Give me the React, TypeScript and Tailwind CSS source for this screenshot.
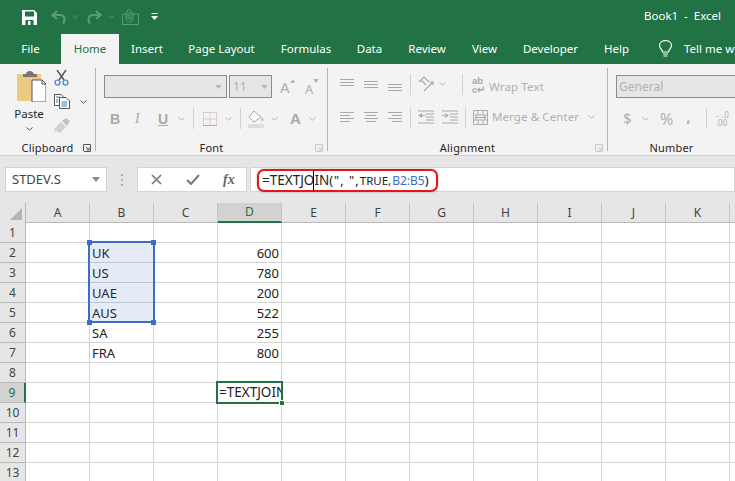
import React from "react";

const FONT = { fontFamily: '"Noto Sans", sans-serif' };

const Chev = ({ className = "", color = "#b4b4b4" }: { className?: string; color?: string }) => (
  <svg width="7" height="4" viewBox="0 0 7 4" className={className}>
    <path d="M0.5 0.5 L3.5 3.2 L6.5 0.5" fill="none" stroke={color} strokeWidth="1" />
  </svg>
);
const Tri = ({ className = "" }: { className?: string }) => (
  <svg width="7" height="4" viewBox="0 0 7 4" className={className}><path d="M0 0H7L3.5 4Z" fill="#b9b9b9" /></svg>
);
const Lines = ({ rows, w = 15 }: { rows: [number, number, number][]; w?: number }) => (
  <svg width={w} height="16" viewBox={`0 0 ${w} 16`}>
    {rows.map(([y, x1, x2], i) => <rect key={i} x={x1} y={y} width={x2 - x1} height="1" fill="#a8a8a8" />)}
  </svg>
);
const Launcher = ({ color = "#c0c0c0" }: { color?: string }) => (
  <svg width="8" height="8" viewBox="0 0 8 8">
    <path d="M0.5 7V0.5H7.5V7.5H1M3 3L6 6M6 3.5V6H3.5" fill="none" stroke={color} strokeWidth="1" />
  </svg>
);
const BigA = ({ up }: { up: boolean }) => (
  <div className="flex items-start w-[15px] h-[18px]">
    <span className={`${up ? "text-[15px]" : "text-[13px] mt-[2px]"} leading-[18px] text-[#b0b0b0]`}>A</span>
    <svg width="6" height="4" viewBox="0 0 6 4" className="mt-[1px]">
      <path d={up ? "M0 4L3 0L6 4Z" : "M0 0H6L3 4Z"} fill="#b4b4b4" />
    </svg>
  </div>
);
const VSep = ({ className = "" }: { className?: string }) => <div className={`w-px h-[21px] bg-[#d2d2d2] ${className}`} />;

const Tabs: [string, number][] = [
  ["File", 61], ["Home", 58], ["Insert", 56], ["Page Layout", 93], ["Formulas", 76], ["Data", 51],
  ["Review", 64], ["View", 51], ["Developer", 81], ["Help", 51],
];
const Cols = ["A", "B", "C", "D", "E", "F", "G", "H", "I", "J", "K", "L"];
const Data: Record<number, { b?: string; d?: string }> = {
  2: { b: "UK", d: "600" }, 3: { b: "US", d: "780" }, 4: { b: "UAE", d: "200" }, 5: { b: "AUS", d: "522" },
  6: { b: "SA", d: "255" }, 7: { b: "FRA", d: "800" },
};

function TitleBar() {
  return (
    <div className="h-[34px] bg-[#217346] flex items-center relative">
      <svg width="15" height="15" viewBox="0 0 15 15" className="ml-[22px]">
        <path d="M0 0H12L15 3V15H0Z" fill="#fff" />
        <rect x="3" y="1.5" width="9" height="5" fill="#217346" />
        <rect x="3.5" y="10" width="8" height="5" fill="#217346" />
        <rect x="6" y="11" width="2.5" height="4" fill="#fff" />
      </svg>
      <svg width="15" height="14" viewBox="0 0 15 14" className="ml-[14px]">
        <path d="M6 1L1.5 5L6 9M2 5H9C12 5 13.5 7 13.5 9.5C13.5 11 13 12.5 12 13.5" fill="none" stroke="#5a9a78" strokeWidth="2.2" />
      </svg>
      <Chev color="#5a9a78" className="ml-[6px]" />
      <svg width="15" height="14" viewBox="0 0 15 14" className="ml-[8px]">
        <path d="M9 1L13.5 5L9 9M13 5H6C3 5 1.5 7 1.5 9.5C1.5 11 2 12.5 3 13.5" fill="none" stroke="#5a9a78" strokeWidth="2.2" />
      </svg>
      <Chev color="#5a9a78" className="ml-[6px]" />
      <svg width="17" height="16" viewBox="0 0 17 16" className="ml-[7px]">
        <path d="M0.5 5H4M11 5H16.5V15.5H0.5V5" fill="none" stroke="#5a9a78" />
        <path d="M5 10V3C5 1 6 0.5 7 0.5C8 0.5 9 1 9 3V10C9 11 7 11 7 10V3M11 3V10C11 12.5 9 13 8 13C6 13 4 12.5 4 10V4" fill="none" stroke="#5a9a78" />
      </svg>
      <svg width="7" height="7" viewBox="0 0 7 7" className="ml-[12px] mb-[2px]">
        <rect x="0.5" y="0" width="6" height="1" fill="#fff" /><path d="M0 3H7L3.5 7Z" fill="#fff" />
      </svg>
      <span className="absolute left-[644px] top-[7px] text-[11.5px] leading-[18px] text-white whitespace-pre">Book1  -  Excel</span>
    </div>
  );
}

function TabRow() {
  return (
    <div className="h-[30px] bg-[#217346] flex overflow-hidden">
      {Tabs.map(([t, w]) => (
        <div key={t} style={{ width: w }} className={`flex items-center justify-center shrink-0 text-[11.5px] ${t === "Home" ? "bg-[#f3f3f3] text-[#217346]" : "text-white"}`}>
          {t}
        </div>
      ))}
      <svg width="15" height="18" viewBox="0 0 15 18" className="ml-[16px] mt-[6px] shrink-0">
        <path d="M4.5 12C4.5 9.5 1.5 8.5 1.5 5.5C1.5 2.5 4.3 0.7 7.5 0.7C10.7 0.7 13.5 2.5 13.5 5.5C13.5 8.5 10.5 9.5 10.5 12ZM5 14H10M5.5 16H9.5" fill="none" stroke="#fff" strokeWidth="1.2" />
      </svg>
      <span className="ml-[11px] text-[11.5px] text-white leading-[30px] whitespace-nowrap">Tell me what</span>
    </div>
  );
}

function Group({ label, width, children, launcher }: { label: string; width: number; children: React.ReactNode; launcher?: string }) {
  return (
    <div style={{ width }} className="shrink-0 flex flex-col h-full relative">
      <div className="flex-1 min-h-0">{children}</div>
      <div className="h-[14px] text-center text-[11px] leading-[14px] text-[#262626] tracking-[0.2px] relative">
        {label}
        {launcher && <span className="absolute right-[4px] top-[3px] flex"><Launcher color={launcher} /></span>}
      </div>
    </div>
  );
}

function Ribbon() {
  return (
    <div className="h-[92px] bg-[#f3f3f3] border-b border-[#d2d2d2] flex text-[#b0b0b0] overflow-hidden">
      <Group label="Clipboard" width={95} launcher="#555555">
        <div className="flex">
          <div className="w-[51px] flex flex-col items-center pl-[7px] pt-[7px]">
            <svg width="29" height="31" viewBox="0 0 29 31" className="ml-[4px]">
              <path d="M0 3H24V30H0Z" fill="#eec981" />
              <path d="M9 3C9 1 11 0 13 0C15 0 16 1 17 3H20V6H6V3Z" fill="#777" />
              <path d="M15 9H25L29 13V31H15Z" fill="#fff" stroke="#555" strokeWidth="1" />
              <path d="M25 9V13H29" fill="none" stroke="#555" />
            </svg>
            <span className="text-[11.5px] leading-[14px] text-[#262626] mt-[5px]">Paste</span>
            <Chev color="#555" className="mt-[6px]" />
          </div>
          <div className="flex flex-col pl-[3px] pt-[6px]">
            <svg width="15" height="16" viewBox="0 0 15 16">
              <path d="M3 0L10 10M12 0L5 10" stroke="#555" strokeWidth="1.5" fill="none" />
              <circle cx="3.5" cy="12.5" r="2.5" fill="none" stroke="#3f7fc1" strokeWidth="1.2" />
              <circle cx="11.5" cy="12.5" r="2.5" fill="none" stroke="#3f7fc1" strokeWidth="1.2" />
            </svg>
            <div className="flex items-center mt-[8px]">
              <svg width="16" height="15" viewBox="0 0 16 15">
                <path d="M0.5 0.5H7L9 2.5V4M0.5 0.5V11.5H5" fill="#fff" stroke="#555" />
                <path d="M5.5 3.5H12L15.5 7V14.5H5.5Z" fill="#fff" stroke="#555" />
                <path d="M2 3H6M2 6H4M2 8H4M7.5 8H13M7.5 10H13M7.5 12H13" stroke="#3f7fc1" />
              </svg>
              <Chev color="#555" className="ml-[10px]" />
            </div>
            <svg width="17" height="15" viewBox="0 0 17 15" className="mt-[9px]">
              <path d="M0 11L7 4L12 9L6 15L3 13L1 14Z" fill="#d4d0d0" />
              <path d="M8 3L12 0L16 3L13 8Z" fill="#c4c0c0" />
            </svg>
          </div>
        </div>
      </Group>
      <div className="w-px my-1 bg-[#b5b5b5]" />
      <Group label="Font" width={231} launcher="#c8c8c8">
        <div className="flex flex-col">
          <div className="flex items-center mt-[11px] h-[23px]">
            <div className="ml-[8px] w-[123px] h-[23px] bg-[#e6e6e6] border border-[#8a8a8a] flex items-center justify-end pr-[4px]"><Tri /></div>
            <div className="ml-[2px] w-[43px] h-[23px] bg-[#e6e6e6] border border-[#8a8a8a] flex items-center justify-between px-[3px] text-[12px]">11<Tri /></div>
            <div className="ml-[8px]"><BigA up /></div>
            <div className="ml-[10px]"><BigA up={false} /></div>
          </div>
          <div className="flex items-center mt-[9px] h-[23px] text-[14px] text-[#a8a8a8]">
            <span className="ml-[14px] w-[9px] font-bold leading-none" style={{ fontFamily: '"Liberation Sans", sans-serif' }}>B</span>
            <span className="ml-[16px] w-[6px] italic leading-none" style={{ fontFamily: '"Liberation Serif", serif' }}>I</span>
            <span className="ml-[17px] w-[9px] underline leading-none font-bold" style={{ fontFamily: '"Liberation Sans", sans-serif' }}>U</span>
            <Chev className="ml-[11px]" />
            <VSep className="ml-[8px]" />
            <svg width="14" height="14" viewBox="0 0 14 14" className="ml-[9px]">
              <path d="M0.5 0.5H13.5V13.5M0.5 0.5V13M7 0.5V13M0.5 7H13.5" fill="none" stroke="#c0a8c0" strokeDasharray="1 1" />
              <rect y="13" width="14" height="1" fill="#b0b0b0" />
            </svg>
            <Chev className="ml-[8px]" />
            <VSep className="ml-[8px]" />
            <svg width="17" height="18" viewBox="0 0 17 18" className="ml-[7px]">
              <path d="M6 1L1 7L6 12L13 7Z" fill="#fff" stroke="#a8a8a8" />
              <path d="M14 7C15 9 16 10 15 11C14 11.5 13 10 14 7Z" fill="#a8a8a8" />
              <rect y="14" width="16" height="4" fill="#dcdcdc" />
            </svg>
            <Chev className="ml-[6px]" />
            <span className="ml-[12px] text-[15px] font-bold leading-none" style={{ fontFamily: '"Liberation Sans", sans-serif' }}>A</span>
            <Chev className="ml-[8px]" />
          </div>
        </div>
      </Group>
      <div className="w-px my-1 bg-[#b5b5b5]" />
      <Group label="Alignment" width={279} launcher="#c8c8c8">
        <div className="flex flex-col">
          <div className="flex items-center mt-[8px] h-[24px]">
            <div className="ml-[12px]"><Lines rows={[[3, 0, 14], [6, 0, 14], [9, 0, 14]]} /></div>
            <div className="ml-[9px]"><Lines rows={[[5, 0, 14], [8, 0, 14], [11, 0, 14]]} /></div>
            <div className="ml-[9px]"><Lines rows={[[8, 0, 14], [11, 0, 14], [14, 0, 14]]} /></div>
            <VSep className="ml-[7px]" />
            <svg width="16" height="17" viewBox="0 0 16 17" className="ml-[7px]">
              <path d="M1 6L6 1L11 6M3 4L8 9M6 15L15 6M12 6H15V9" fill="none" stroke="#a8a8a8" strokeWidth="1.2" />
            </svg>
            <Chev className="ml-[5px]" />
            <VSep className="ml-[16px]" />
            <span className="ml-[9px] w-[14px] mt-[2px] text-[9.5px] leading-[9px] font-bold text-[#a8a8a8]" style={{ fontFamily: '"Liberation Sans", sans-serif' }}>ab<br />c↵</span>
            <span className="ml-[3px] mt-[6px] text-[11.5px] tracking-[0.15px] leading-none whitespace-nowrap">Wrap Text</span>
          </div>
          <div className="flex items-center mt-[9px] h-[24px]">
            <div className="ml-[12px]"><Lines rows={[[3, 0, 14], [6, 0, 10], [9, 0, 14], [12, 0, 10]]} /></div>
            <div className="ml-[9px]"><Lines rows={[[3, 0, 14], [6, 2, 12], [9, 0, 14], [12, 2, 12]]} /></div>
            <div className="ml-[9px]"><Lines rows={[[3, 0, 14], [6, 4, 14], [9, 0, 14], [12, 4, 14]]} /></div>
            <VSep className="ml-[7px]" />
            <svg width="16" height="14" viewBox="0 0 16 14" className="ml-[7px]">
              <path d="M16 1H0M16 4H8M16 7H8M16 10H8M16 13H0" stroke="#a8a8a8" /><path d="M0 5.5L4 3V8ZM3 5H7V6H3Z" fill="#a8a8a8" />
            </svg>
            <svg width="16" height="14" viewBox="0 0 16 14" className="ml-[8px]">
              <path d="M16 1H0M16 4H8M16 7H8M16 10H8M16 13H0" stroke="#a8a8a8" /><path d="M7 5.5L3 3V8ZM0 5H4V6H0Z" fill="#a8a8a8" />
            </svg>
            <VSep className="ml-[7px]" />
            <svg width="15" height="15" viewBox="0 0 15 15" className="ml-[7px]">
              <path d="M0.5 0.5H14.5V14.5H0.5ZM0.5 5H14.5M0.5 10H14.5M5 0.5V5M10 0.5V5M5 10V14.5M10 10V14.5" fill="none" stroke="#b4a8b4" />
              <path d="M2 7.5H13M4 6L2 7.5L4 9M11 6L13 7.5L11 9" fill="none" stroke="#a8a8a8" />
            </svg>
            <span className="ml-[4px] text-[11.5px] tracking-[0.1px] leading-none whitespace-nowrap">Merge &amp; Center</span>
            <Chev className="ml-[9px]" />
          </div>
        </div>
      </Group>
      <div className="w-px my-1 bg-[#b5b5b5]" />
      <Group label="Number" width={127}>
        <div className="flex flex-col">
          <div className="mt-[11px] ml-[8px] w-[135px] h-[23px] bg-[#e6e6e6] border border-[#8a8a8a] flex items-center pl-[2px] text-[12px]">General</div>
          <div className="flex items-center mt-[9px] h-[23px]">
            <span className="ml-[15px] w-[10px] text-[15px] leading-none">$</span>
            <Chev className="ml-[9px]" />
            <span className="ml-[11px] text-[16px] leading-none">%</span>
            <span className="ml-[13px] text-[15px] leading-none font-bold -mt-[4px]">,</span>
            <VSep className="ml-[15px]" />
            <span className="ml-[7px] text-[8px] leading-[8px] text-center w-[16px]">←.0<br />.00</span>
          </div>
        </div>
      </Group>
    </div>
  );
}

function FormulaBar() {
  return (
    <div className="h-[47px] bg-[#e6e6e6] flex items-start pt-[11px] text-[#444]">
      <div className="ml-[5px] w-[102px] h-[25px] bg-white border border-[#d4d4d4] flex items-center justify-between pl-[6px] pr-[6px] text-[13px] text-[#444]">
        STDEV.S
        <svg width="8" height="5" viewBox="0 0 8 5"><path d="M0 0H8L4 5Z" fill="#8a8a8a" /></svg>
      </div>
      <div className="ml-[14px] mr-[14px] mt-[7px] flex flex-col gap-[3px]">
        <div className="w-[2px] h-[2px] bg-[#b0b0b0]" /><div className="w-[2px] h-[2px] bg-[#b0b0b0]" /><div className="w-[2px] h-[2px] bg-[#b0b0b0]" />
      </div>
      <div className="w-[110px] h-[25px] bg-white border border-[#d4d4d4] flex items-center">
        <svg width="11" height="11" viewBox="0 0 11 11" className="ml-[13px]"><path d="M1 1L10 10M10 1L1 10" stroke="#7a7a7a" strokeWidth="1.7" /></svg>
        <svg width="14" height="11" viewBox="0 0 14 11" className="ml-[24px]"><path d="M1 6L5 10L13 1" fill="none" stroke="#7a7a7a" strokeWidth="2" /></svg>
        <span className="ml-[23px] text-[14px] italic font-bold text-[#666] leading-none" style={{ fontFamily: '"Liberation Serif", serif' }}>fx</span>
      </div>
      <div className="ml-[3px] flex-1 h-[25px] bg-white border border-[#d4d4d4] relative">
        <div className="absolute left-[6px] top-[1px] w-[181px] h-[23px] rounded-[7px] border-2 border-[#e8141c] shadow-[0_0_2px_#999]" />
        <div className="pl-[11px] text-[13.5px] leading-[25px] text-[#222] whitespace-nowrap relative">
          =TEXTJOIN<span className="text-[12.5px] tracking-[1.1px]">(&quot;, &quot;,</span><span className="text-[11.5px]">TRUE,</span><span className="text-[12px] text-[#3b6fc9] ml-[1px]">B2:B5</span><span className="text-[13px]">)</span>
        </div>
        <div className="absolute left-[62px] top-[2px] w-px h-[21px] bg-black" />
      </div>
    </div>
  );
}

function Sheet() {
  return (
    <div className="relative flex-1 overflow-hidden bg-white text-[13px] text-[#222]">
      <div className="flex h-[20px] bg-[#e6e6e6] text-[#444] text-[12px]">
        <div className="w-[26px] shrink-0 border-r border-[#b8b8b8] flex items-end justify-end p-[3px]">
          <svg width="12" height="12" viewBox="0 0 12 12"><path d="M12 0V12H0Z" fill="#b4b4b4" /></svg>
        </div>
        {Cols.map((c) => (
          <div key={c} className={`w-[64px] shrink-0 border-r border-[#c4c4c4] flex items-center justify-center ${c === "D" ? "bg-[#d2d2d2] border-b-2 border-b-[#217346] text-[#217346]" : "border-b border-b-[#b8b8b8]"}`}>
            {c}
          </div>
        ))}
      </div>
      {Array.from({ length: 13 }, (_, i) => i + 1).map((r) => {
        const row = Data[r] || {};
        return (
          <div key={r} className="flex h-[20px]">
            <div className={`w-[26px] shrink-0 border-b border-[#b8b8b8] flex items-center justify-center text-[12px] ${r === 9 ? "bg-[#d2d2d2] border-r-2 border-r-[#217346] text-[#217346]" : "bg-[#e6e6e6] border-r border-r-[#b8b8b8] text-[#444]"}`}>
              {r}
            </div>
            {Cols.map((c) => (
              <div key={c} className={`w-[64px] shrink-0 border-r border-b border-[#d4d4d4] flex items-center px-[2px] pt-[2px] leading-none ${c === "D" ? "justify-end" : ""}`}>
                {c === "B" ? row.b : c === "D" ? row.d : ""}
              </div>
            ))}
          </div>
        );
      })}
      {/* Range highlight of B2:B5 */}
      <div className="absolute left-[88px] top-[38px] w-[67px] h-[82px] border-2 border-[#3a6fc8] bg-[#2f63c0]/12 pointer-events-none" />
      {["left-[87px] top-[37px]", "left-[151px] top-[37px]", "left-[87px] top-[117px]", "left-[151px] top-[117px]"].map((p) => (
        <div key={p} className={`absolute ${p} w-[5px] h-[5px] bg-[#3a6fc8]`} />
      ))}
      {/* Active cell D9 */}
      <div className="absolute left-[216px] top-[178px] w-[67px] h-[23px] border-2 border-[#217346] bg-white pl-[1px] leading-[19px] overflow-hidden whitespace-nowrap text-[13.5px]">=TEXTJOIN</div>
      <div className="absolute left-[279px] top-[197px] w-[6px] h-[6px] bg-[#217346] border border-white" />
    </div>
  );
}

export default function App() {
  return (
    <div className="w-[735px] h-[481px] flex flex-col overflow-hidden bg-white" style={FONT}>
      <TitleBar />
      <TabRow />
      <Ribbon />
      <FormulaBar />
      <Sheet />
    </div>
  );
}
